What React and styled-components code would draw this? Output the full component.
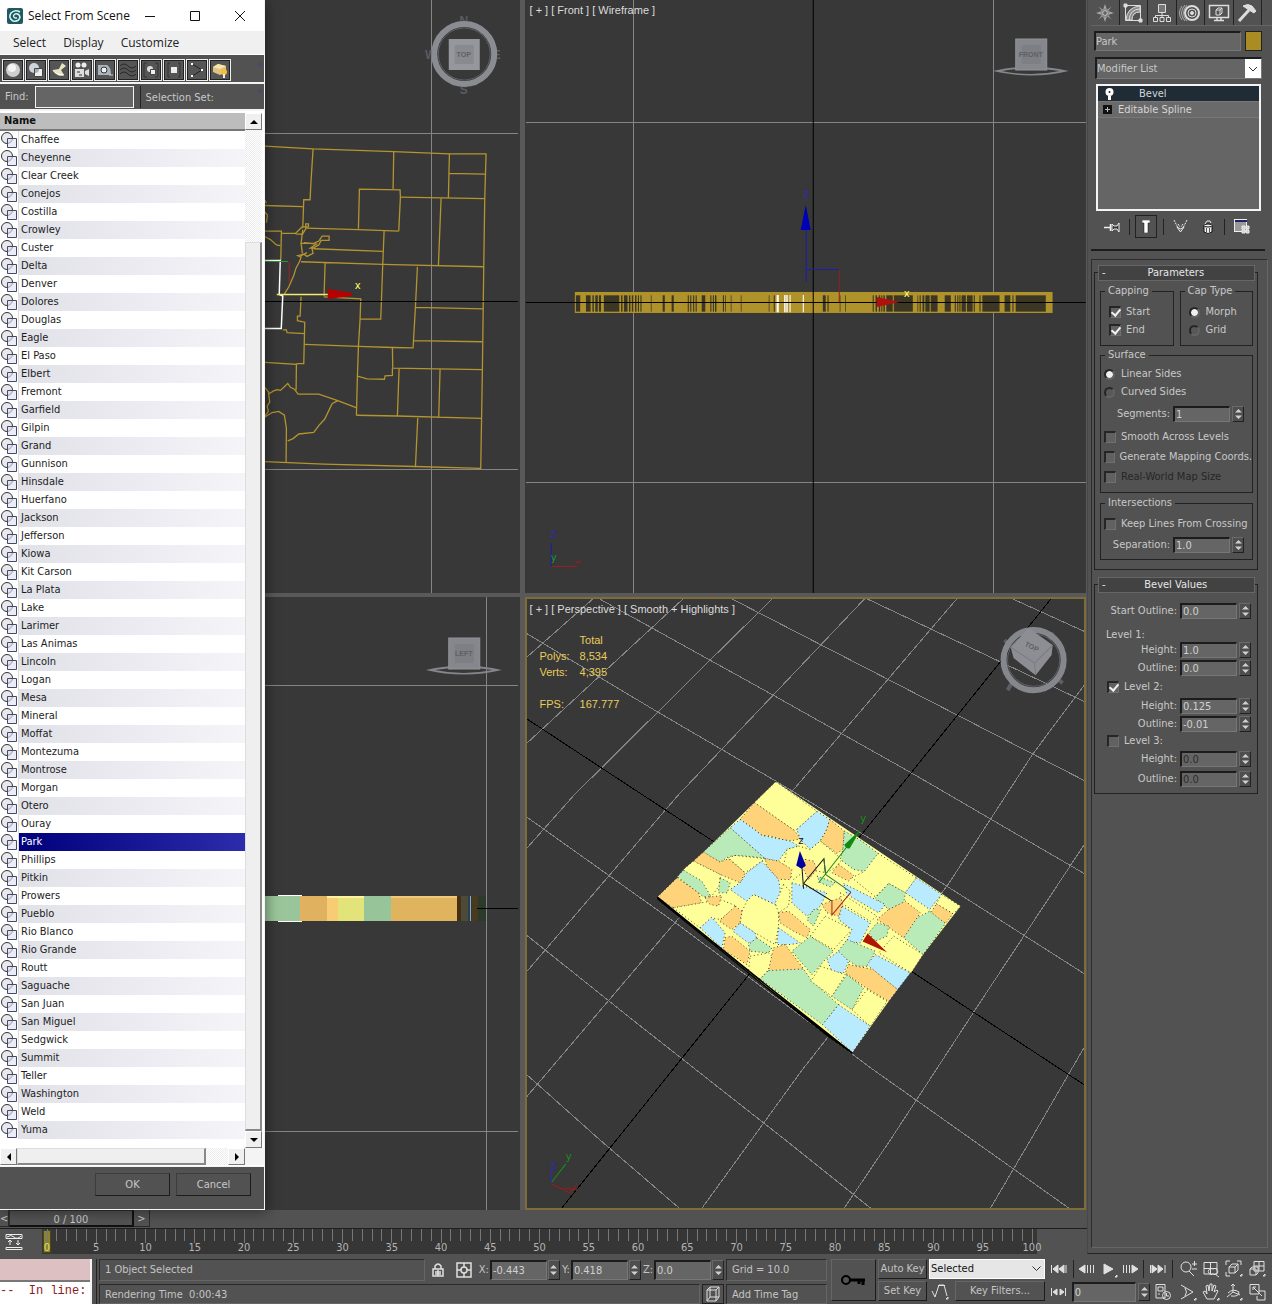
import { useState } from "react";
import styled, { createGlobalStyle, css } from "styled-components";

const GlobalStyle = createGlobalStyle`
    * {
        box-sizing: border-box;
    }

    body {
        margin: 0;
        background: #525252;
        color: #c8c8c8;
        font-family: "DejaVu Sans Condensed", "Noto Sans", sans-serif;
        font-size: 11px;
        line-height: 14px;
    }

    button, input, select {
        font: inherit;
        color: inherit;
        margin: 0;
        padding: 0;
        border-radius: 0;
    }

    svg {
        display: block;
        flex: none;
    }
`;

const counties = [
    "Chaffee", "Cheyenne", "Clear Creek", "Conejos", "Costilla", "Crowley",
    "Custer", "Delta", "Denver", "Dolores", "Douglas", "Eagle", "El Paso",
    "Elbert", "Fremont", "Garfield", "Gilpin", "Grand", "Gunnison",
    "Hinsdale", "Huerfano", "Jackson", "Jefferson", "Kiowa", "Kit Carson",
    "La Plata", "Lake", "Larimer", "Las Animas", "Lincoln", "Logan", "Mesa",
    "Mineral", "Moffat", "Montezuma", "Montrose", "Morgan", "Otero", "Ouray",
    "Park", "Phillips", "Pitkin", "Prowers", "Pueblo", "Rio Blanco",
    "Rio Grande", "Routt", "Saguache", "San Juan", "San Miguel", "Sedgwick",
    "Summit", "Teller", "Washington", "Weld", "Yuma",
];

const Page = styled.div`
    display: flex;
    flex-direction: column;
    min-height: 100vh;
`;

const Workspace = styled.div`
    position: relative;
    flex: 1;
    display: flex;
`;

const Stage = styled.main`
    flex: 1;
    min-width: 0;
    display: flex;
    flex-direction: column;
`;

function App() {
    return (
        <Page>
            <GlobalStyle />
            <Workspace>
                <Stage>
                    <Viewports />
                    <TimeSlider />
                    <TrackBar />
                </Stage>
                <CommandPanel />
                <SelectDialog />
            </Workspace>
            <StatusBar />
        </Page>
    );
}

/* ---------- viewports ---------- */

const Quad = styled.div`
    flex: 1;
    display: grid;
    grid-template-columns: 520fr 562fr;
    grid-template-rows: 593fr 613fr;
    gap: 4px 5px;
    padding-right: 1px;
    background: #595959;
`;

const View = styled.section`
    position: relative;
    overflow: hidden;
    background: #383838;
    border: ${(p) => (p.$active ? "2px solid #806c38" : "0")};
`;

const Drawing = styled.svg`
    position: absolute;
    inset: 0;
    width: 100%;
    height: 100%;
`;

const ViewLabel = styled.div`
    position: relative;
    padding: ${(p) => (p.$active ? "3px 3px" : "3px 5px")};
    font-family: "Liberation Sans", sans-serif;
    color: #dcdcdc;
`;

const Stats = styled.dl`
    position: relative;
    display: grid;
    grid-template-columns: 40px auto;
    justify-content: start;
    margin: 13px;
    line-height: 16px;
    font-family: "Liberation Sans", sans-serif;
    color: #e8cd5a;

    dt, dd {
        margin: 0;
        min-height: 16px;
    }
`;

const grid = { stroke: "#858585", strokeWidth: 1, fill: "none" };

const Axis = ({ x, y, color, children }) => (
    <text x={x} y={y} fill={color} fontSize="10" fontFamily="DejaVu Sans">
        {children}
    </text>
);

const CubeText = ({ x, y, children, ...rest }) => (
    <text
        x={x}
        y={y}
        textAnchor="middle"
        fontSize="7"
        fontWeight="bold"
        fontFamily="Liberation Sans"
        fill="#5e6066"
        {...rest}
    >
        {children}
    </text>
);

const SideCube = ({ x, y, children }) => (
    <g>
        <path
            d={`M${x - 38} ${y + 17}Q${x} ${y + 8} ${x + 38} ${y + 17}Q${x} ${y + 26} ${x - 38} ${y + 17}ZM${x - 29} ${y + 17}Q${x} ${y + 23} ${x + 29} ${y + 17}Q${x} ${y + 12} ${x - 29} ${y + 17}Z`}
            fill="#85878c"
            fillRule="evenodd"
        />
        <rect x={x - 15} y={y - 15} width="31" height="31" fill="#85878c" stroke="#929499" />
        <rect x={x - 9} y={y - 9} width="19" height="19" fill="#7d7f84" />
        <CubeText x={x} y={y + 3}>{children}</CubeText>
    </g>
);

const countyLines = [
    "M3 382L148 389L390 396L557 402H667L663 520L660 700L656 964L651 1224L455 1219L180 1213L3 1206",
    "M148 389L142 470L139 522H120L117 595M3 537L117 540M3 523L8 531",
    "M390 396L388 494M284 598L287 494L409 496L410 515L405 604",
    "M557 402L554 516M557 453L664 455M410 515L664 519M532 519L524 694",
    "M127 596L284 600L405 604M361 604L357 692L351 834H289",
    "M112 684L357 691L660 697M150 650L357 657M184 688L181 773",
    "M3 604H53L51 680M55 610H95L115 593H134V585H126V598L116 612L95 611",
    "M117 600L112 636H150L165 630L175 617H196V628H172L165 640L145 650L148 662L130 670L120 664L102 668L112 672L107 684L97 700L90 720L75 750L62 768",
    "M112 636L116 662M120 634L158 638L140 648H150M108 670L130 660",
    "M461 697L455 803L448 909L386 908M455 803L658 807M450 890L656 893",
    "M180 776L291 781L289 834L284 905M112 775L109 826H101V838L123 842L120 950H98",
    "M122 900L284 905L386 908L387 962L656 966",
    "M284 905L281 983L278 1085M281 983L310 990L362 991L364 982L386 981V962",
    "M406 964L401 1085M529 964L525 1089M278 1085L401 1087L652 1093M462 1092L455 1221",
    "M3 947L98 952L97 1020M57 862H68L70 869L123 872",
    "M3 1012L18 1028L28 1022L40 1018L50 1020L72 1002L80 1012L92 1017L103 1030H165L222 1047L277 1065",
    "M222 1047L205 1055L183 1095L165 1112L150 1130L105 1134L88 1146L72 1152",
    "M3 1090L25 1078L45 1075L62 1085L68 1120L67 1208",
    "M14 1026L18 1050L10 1062L14 1074L3 1088M3 554L11 562L8 582M3 618L20 626L38 640L50 642",
];

const TopView = () => (
    <View aria-label="Top viewport">
        <Drawing viewBox="0 0 520 593" preserveAspectRatio="xMidYMid slice">
            <g {...grid} shapeRendering="crispEdges">
                <path d="M431.5 0V593M0 133.5H518M0 469.5H518" />
            </g>
            <g
                transform="translate(264 0) scale(.3333 .3827)"
                fill="none"
                stroke="#b3942f"
                strokeWidth="1.3"
            >
                {countyLines.map((d) => (
                    <path key={d} d={d} vectorEffect="non-scaling-stroke" />
                ))}
            </g>
            <path d="M0 301.5H518" stroke="#000" />
            <path d="M265 260.5H280.500L279.500 294.500L283 296L281.500 328.500H265" fill="none" stroke="#fff" strokeWidth="1.5" />
            <path d="M265 261.5H288" stroke="#2e9b2e" />
            <path d="M289.500 262V282" stroke="#9b2424" />
            <path d="M277 294.500H330" stroke="#f4ea6c" strokeWidth="1.5" />
            <path d="M328 289L352 293V296L328 299Z" fill="#b80000" />
            <Axis x="355" y="289" color="#ffff66">x</Axis>
            <g fontFamily="Liberation Sans" fontSize="12" fontWeight="bold" fill="#5a5c61" textAnchor="middle">
                <text x="464" y="25">N</text>
                <text x="464" y="94">S</text>
                <text x="431" y="59">W</text>
                <text x="497" y="59">E</text>
            </g>
            <circle cx="464.500" cy="54" r="30" fill="none" stroke="#8a8c92" strokeWidth="6" />
            <circle cx="464.500" cy="54" r="26" fill="none" stroke="#5c5e63" />
            <rect x="449" y="39" width="31" height="31" fill="#95979d" />
            <rect x="455" y="45" width="19" height="19" fill="#888a90" />
            <CubeText x="464" y="57">TOP</CubeText>
        </Drawing>
    </View>
);

// dark slots between the vertical edges of the slab, as [from, to]
const slots = [
    [140, 152], [168, 181], [186, 190], [194, 201], [204, 210], [218, 261],
    [266, 270], [274, 284], [288, 292], [296, 300], [305, 309], [313, 316],
    [320, 323], [349, 351], [382, 388], [407, 413], [452, 455], [459, 462],
    [467, 470], [474, 477], [491, 501], [515, 518], [522, 525], [528, 532],
    [550, 553], [556, 558], [572, 574], [600, 602], [678, 680], [692, 695],
    [829, 837], [842, 845], [876, 878], [891, 893], [968, 971], [976, 980],
    [985, 989], [992, 995], [998, 1002], [1006, 1024], [1027, 1080],
    [1093, 1095], [1099, 1102], [1107, 1112], [1115, 1127], [1130, 1149],
    [1169, 1186], [1197, 1200], [1204, 1207], [1210, 1213], [1216, 1228],
    [1231, 1247], [1250, 1253], [1266, 1269], [1274, 1322], [1336, 1352],
    [1358, 1361], [1367, 1451],
];
const whiteEdges = [[700, 706], [721, 725], [727, 731], [736, 739], [773, 776]];

const FrontView = () => (
    <View aria-label="Front viewport">
        <Drawing viewBox="525 0 562 593" preserveAspectRatio="xMidYMid slice">
            <g {...grid} shapeRendering="crispEdges">
                <path d="M633.5 0V593M993.5 0V593M526 122.5H1086M526 482.5H1086" />
            </g>
            <g transform="translate(526 180) scale(.3584 .3333)">
                <rect x="137" y="336" width="1333" height="63" fill="#b0922a" />
                {slots.map(([a, b]) => (
                    <rect key={a} x={a} y="346" width={b - a} height="49" fill="#3c3724" />
                ))}
                {whiteEdges.map(([a, b]) => (
                    <rect key={a} x={a} y="345" width={b - a} height="52" fill="#fff" />
                ))}
            </g>
            <g fill="none">
                <path d="M526 302.5H1086M813.5 0V593" stroke="#000" />
                <path d="M806.500 282V230M806 269.500H839" stroke="#1c1cb0" />
                <path d="M839.500 270V302" stroke="#962020" />
                <path d="M551.500 543V566" stroke="#1c1cb0" />
                <path d="M552 566.500H577" stroke="#9a1c1c" />
            </g>
            <path d="M806 205L811 230H801Z" fill="#0000b4" />
            <path d="M877 297L900 302L877 307Z" fill="#b01010" />
            <path d="M574 560L578 562L583 560L578 564Z" fill="#9a1c1c" />
            <Axis x="804" y="197" color="#2828d0">z</Axis>
            <Axis x="904" y="297" color="#ffff66">x</Axis>
            <Axis x="551" y="537" color="#2828d0">z</Axis>
            <Axis x="551" y="561" color="#159a3a">y</Axis>
            <SideCube x={1031} y={54}>FRONT</SideCube>
        </Drawing>
        <ViewLabel>[ + ] [ Front ] [ Wireframe ]</ViewLabel>
    </View>
);

const LeftView = () => (
    <View aria-label="Left viewport">
        <Drawing viewBox="0 597 520 613" preserveAspectRatio="xMidYMid slice">
            <g {...grid} shapeRendering="crispEdges">
                <path d="M486.500 597V1210M0 685.500H518M0 1131.500H518" />
            </g>
            <g shapeRendering="crispEdges">
                <rect x="0" y="896" width="300" height="25" fill="#9ac59a" />
                <rect x="300" y="896" width="27" height="25" fill="#e0b15e" />
                <rect x="327" y="896" width="11" height="25" fill="#f8cc74" />
                <rect x="338" y="896" width="26" height="25" fill="#e2e47a" />
                <rect x="364" y="896" width="27" height="25" fill="#98c49a" />
                <rect x="391" y="896" width="66" height="25" fill="#e0b45e" />
                <rect x="457" y="896" width="4" height="25" fill="#453014" />
                <rect x="461" y="896" width="7" height="25" fill="#4d4a38" />
                <rect x="468" y="896" width="3" height="25" fill="#2c3f4e" />
                <rect x="470" y="896" width="1" height="25" fill="#7fb0cc" />
                <rect x="472" y="896" width="6" height="25" fill="#4a3a1c" />
                <rect x="478" y="896" width="8" height="25" fill="#2b3a2b" />
                <rect x="327" y="896" width="37" height="2" fill="#fff2a0" />
                <rect x="391" y="896" width="66" height="2" fill="#f0c87c" />
                <path d="M278 895.500H302M278 921.500H302" stroke="#fff" />
                <path d="M477 908.500H518" stroke="#000" />
            </g>
            <SideCube x={464} y={653}>LEFT</SideCube>
        </Drawing>
    </View>
);

const Y = "#ffff99";
const O = "#ffd37a";
const B = "#b9ebff";
const G = "#b9ebb9";

const regions = [
    [Y, "407,37 530,126 470,180 462,183 343,100"],
    [O, "343,100 462,183 482,208 450,215 425,210 390,200 365,198 345,182 300,150"],
    [B, "300,150 345,182 365,198 425,210 450,215 475,230 440,240 415,275 375,268 270,175"],
    [G, "270,175 375,268 340,262 285,258 265,262 240,278 190,248"],
    [B, "530,126 568,150 560,180 540,215 510,240 480,210 470,180"],
    [O, "568,150 612,185 608,240 590,252 540,215 560,180"],
    [G, "612,185 665,215 713,252 695,290 672,306 640,300 600,270 608,240"],
    [Y, "713,252 828,325 795,370 745,342 705,382 635,325 672,306"],
    [B, "828,325 903,375 868,420 795,370"],
    [Y, "903,375 960,410 938,433 888,403"],
    [O, "888,403 938,433 915,462 870,432"],
    [G, "868,425 915,462 848,555 790,505 820,450"],
    [G, "745,342 795,370 790,400 745,420 705,385"],
    [O, "745,420 795,395 840,430 790,505 740,470 710,450"],
    [Y, "475,230 510,240 540,215 605,270 590,290 560,310 500,300 460,330 430,290 440,240"],
    [O, "495,270 520,275 530,300 505,330 490,300"],
    [O, "375,268 415,275 455,300 450,330 415,330 380,290"],
    [B, "365,275 415,330 420,360 415,410 340,375 320,395 270,360 300,340 320,310"],
    [Y, "285,258 375,268 330,300 315,310 265,265"],
    [O, "190,248 240,278 265,268 315,310 300,340 240,315 160,275"],
    [Y, "160,275 240,315 240,345 215,380 205,380 130,300"],
    [G, "130,302 185,335 212,380 190,382 112,322"],
    [G, "240,325 270,340 262,370 235,370"],
    [O, "112,325 175,370 185,400 100,415 52,383"],
    [Y, "100,415 185,400 240,390 290,410 240,450 215,445 180,475"],
    [O, "195,385 245,378 235,410 210,405"],
    [B, "180,475 215,443 255,490 245,535"],
    [O, "285,410 306,425 300,460 275,480 238,455"],
    [Y, "306,425 320,395 340,375 415,410 415,470 405,525 345,490 300,460"],
    [Y, "430,345 450,365 445,410 415,430 405,400 420,370"],
    [B, "455,340 490,350 560,370 540,410 500,440 455,400"],
    [O, "415,430 445,425 510,480 500,505 460,485 420,460"],
    [B, "415,475 480,520 450,525 410,525"],
    [B, "300,460 345,490 350,510 325,520 278,485"],
    [O, "255,505 275,500 330,545 320,585 250,540"],
    [G, "350,505 395,535 385,550 330,545 325,525"],
    [Y, "330,560 385,550 400,565 385,600 360,628 325,605"],
    [O, "400,535 435,525 450,545 490,598 440,615 385,603"],
    [G, "510,500 580,545 555,570 515,615 455,545"],
    [G, "385,603 490,598 515,635 595,705 547,765 360,628"],
    [Y, "555,440 635,480 580,540 510,500"],
    [G, "520,420 542,420 520,470 500,450"],
    [O, "545,405 600,385 612,400 595,440 560,430"],
    [B, "605,410 690,460 660,520 620,515 635,480 595,450"],
    [G, "620,510 705,545 680,590 650,590 590,550"],
    [B, "560,570 595,545 625,575 610,610 575,605"],
    [Y, "540,590 615,615 575,680 512,635"],
    [G, "620,615 670,655 635,720 575,680"],
    [O, "625,585 700,600 772,660 745,695 670,650 615,610"],
    [B, "705,555 810,610 772,660 680,585"],
    [Y, "760,500 848,555 812,610 715,550"],
    [G, "710,460 745,470 740,500 705,515 685,490"],
    [Y, "680,660 740,695 690,770 635,720"],
    [B, "595,705 690,770 636,848 547,765"],
    [B, "610,342 735,405 715,430 620,375"],
    [Y, "600,370 710,440 690,455 605,402"],
    [O, "595,285 640,318 625,335 575,310"],
    [G, "530,320 585,340 570,352 540,340"],
];

const PerspectiveView = () => (
    <View $active aria-label="Perspective viewport">
        <Drawing viewBox="527 600 557 608" preserveAspectRatio="xMidYMid slice">
            <g {...grid} shapeRendering="crispEdges">
                <path d="M1010 599L1085 633M865 599L1085 703M730 599L1085 782M598 599L773 696L910 773L1085 875M526 634L658 713L776 782L917 868L1085 975" />
                <path d="M526 817L675 923L873 1070L1068 1208M526 935L640 1026L785 1140L870 1208M526 1074L600 1140L679 1208" />
                <path d="M594 599L526 659M684 599L526 745M773 599L710 661L574 796L526 850M865 599L678 796L526 973M957 599L791 793L675 923L526 1098" />
                <path d="M1085 684L1032 755L947 886L802 1070L702 1208M1085 843L980 1002L890 1140L844 1208M1085 1045L1030 1140L990 1208" />
            </g>
            <path d="M526 719L1085 1086M1051 599L748 976L562 1208" stroke="#000" shapeRendering="crispEdges" fill="none" />
            <g transform="translate(640 770) scale(.3333)">
                <path d="M52 380L636 848L634 852L560 800L360 640L52 390Z" fill="#000" />
                <polygon points="407,37 960,410 848,555 770,660 636,848 360,636 52,383" fill={Y} />
                {regions.map(([fill, points]) => (
                    <polygon
                        key={points}
                        points={points}
                        fill={fill}
                        stroke="#222"
                        strokeWidth="2.500"
                        strokeDasharray="3 8"
                    />
                ))}
                <path d="M52 383L360 632L636 850" stroke="#000" strokeWidth="5" fill="none" />
                <g fill="none" strokeWidth="3">
                    <path d="M490 342L575 395M490 342L551 268L556 315" stroke="#111" />
                    <path d="M551 268L556 315L632 368" stroke="#2b7a52" />
                    <path d="M535 340L620 232" stroke="#158a15" />
                    <path d="M575 395V437L632 368" stroke="#a03010" />
                    <path d="M485 290L490 358" stroke="#111133" />
                </g>
                <path d="M479 245L497 288L484 298L468 288Z" fill="#0000a0" />
                <path d="M612 226Q618 240 628 237L662 180Z" fill="#128a12" />
                <path d="M667 516L682 492L740 548Z" fill="#b01500" />
            </g>
            <Axis x="798" y="845" color="#101030">z</Axis>
            <Axis x="860" y="823" color="#189018">y</Axis>
            <path d="M551.500 1170V1182" stroke="#2828d0" />
            <path d="M552 1182L566 1164" stroke="#189018" />
            <path d="M552 1184L570 1193L577 1184M564 1188L578 1190" stroke="#9a1c1c" fill="none" />
            <Axis x="551" y="1169" color="#2828d0">z</Axis>
            <Axis x="566" y="1160" color="#189018">y</Axis>
            <path d="M1004 641L1010 647M1053 634L1048 640M1007 691L1011 684M1062 684L1057 680" stroke="#5c5e64" strokeWidth="4" />
            <circle cx="1033" cy="661" r="30" fill="none" stroke="#85878d" strokeWidth="6" />
            <circle cx="1033" cy="661" r="26" fill="none" stroke="#5c5e63" />
            <path d="M1028 629L1052 646L1051 656L1035 676L1013 659L1010 648Z" fill="#8c8e94" />
            <path d="M1010 648L1034 664L1052 646M1034 664L1035 676" stroke="#7a7c82" fill="none" />
            <CubeText x="1031" y="650" transform="rotate(26 1031 648)">TOP</CubeText>
        </Drawing>
        <ViewLabel $active>[ + ] [ Perspective ] [ Smooth + Highlights ]</ViewLabel>
        <Stats>
            <dt />
            <dd>Total</dd>
            <dt>Polys:</dt>
            <dd>8,534</dd>
            <dt>Verts:</dt>
            <dd>4,395</dd>
            <dt />
            <dd />
            <dt>FPS:</dt>
            <dd>167.777</dd>
        </Stats>
    </View>
);

const Viewports = () => (
    <Quad>
        <TopView />
        <FrontView />
        <LeftView />
        <PerspectiveView />
    </Quad>
);

/* ---------- time slider and track bar ---------- */

const SliderRow = styled.div`
    display: flex;
    height: 19px;
    padding-bottom: 1px;
    border-bottom: 1px solid #1e1e1e;
`;

const FrameStep = styled.button`
    width: ${(p) => p.$width}px;
    padding-top: 2px;
    background: none;
    border: 1px solid #2a2a2a;
    border-left: 0;
    border-top: 0;
`;

const SliderThumb = styled.button`
    width: 125px;
    padding-top: 2px;
    background: none;
    border: 1px solid #303030;
    border-right: 2px solid #111;
    border-bottom: 2px solid #111;
`;

const TimeSlider = () => (
    <SliderRow>
        <FrameStep $width={9}>&lt;</FrameStep>
        <SliderThumb>0 / 100</SliderThumb>
        <FrameStep $width={16}>&gt;</FrameStep>
    </SliderRow>
);

const TrackRow = styled.div`
    display: flex;
    height: 25px;
`;

const CurveButton = styled.button`
    width: 42px;
    padding-left: 5px;
    background: none;
    border: 0;
    color: #eee;
`;

const Track = styled.div`
    position: relative;
    flex: 1;
    margin-right: 50px;
    padding: 12px 5px 0;
    background: #363636;
`;

const Ticks = styled.svg`
    position: absolute;
    top: 0;
    left: 5px;
    width: calc(100% - 10px);
    height: 25px;
    overflow: visible;
`;

const TrackLabels = styled.div`
    position: relative;
    display: flex;
    justify-content: space-between;
    color: #b4b4b4;

    span {
        display: flex;
        justify-content: center;
        width: 0;
    }

    span:first-child {
        color: #e6dc50;
    }
`;

const Playhead = styled.div`
    position: absolute;
    left: 1px;
    top: 1px;
    width: 8px;
    height: 23px;
    background: #8a8432;
    border: 1px solid #4a4720;
`;

const TrackBar = () => {
    const frames = Array.from({ length: 101 }, (_, i) => i);
    return (
        <TrackRow>
            <CurveButton aria-label="Open mini curve editor">
                <svg width="18" height="17" fill="none" stroke="currentColor">
                    <path d="M1 1.500H17V5.500H1ZM1 14.500H17V16.500H1Z" />
                    <path d="M2 4Q6 1 9 4T16 3M5 12V7M3 9L5 7L7 9M13 7V12M11 10L13 12L15 10" />
                </svg>
            </CurveButton>
            <Track>
                <Playhead />
                <Ticks shapeRendering="crispEdges">
                    {frames.map((f) => (
                        <line key={f} x1={`${f}%`} x2={`${f}%`} y1="0" y2={f % 5 ? 12 : 14} stroke="#777" />
                    ))}
                </Ticks>
                <TrackLabels>
                    {frames.filter((f) => f % 5 === 0).map((f) => (
                        <span key={f}>{f}</span>
                    ))}
                </TrackLabels>
            </Track>
        </TrackRow>
    );
};

/* ---------- shared controls ---------- */

const sunken = css`
    background: #656565;
    border: 2px solid #1c1c1c;
    border-right: 1px solid #777;
    border-bottom: 1px solid #777;
`;

const SpinInput = styled.input`
    ${sunken}
    width: ${(p) => p.$width || 57}px;
    min-width: 0;
    height: ${(p) => p.$height || 16}px;
    padding-left: 1px;
    color: ${(p) => (p.disabled ? "#2c2c2c" : "#d0d0d0")};
`;

const SpinButton = styled.button`
    display: flex;
    align-items: center;
    justify-content: center;
    width: 12px;
    height: ${(p) => p.$height || 16}px;
    background: #4e4e4e;
    border: 1px solid #6a6a6a;
    border-right-color: #222;
    border-bottom-color: #222;
    color: #d0d0d0;
`;

const Spin = ({ $height }) => (
    <SpinButton $height={$height} aria-label="Adjust value">
        <svg width="7" height="10" fill="currentColor">
            <path d="M3.500 0L7 3.500H0ZM3.500 10L7 6.500H0Z" />
        </svg>
    </SpinButton>
);

const SpinRow = styled.label`
    display: flex;
    align-items: center;
    justify-content: flex-end;
    height: ${(p) => p.$height || 18}px;
    padding-right: 8px;

    input {
        margin: 0 2px 0 3px;
    }
`;

const Spinner = ({ label, value, height, disabled }) => (
    <SpinRow $height={height}>
        {label}
        <SpinInput defaultValue={value} disabled={disabled} />
        <Spin />
    </SpinRow>
);

const Tick = styled.input.attrs({ type: "checkbox" })`
    appearance: none;
    display: grid;
    place-content: center;
    width: 12px;
    height: 12px;
    background: #616161;
    border: 2px solid #262626;
    border-right: 1px solid #707070;
    border-bottom: 1px solid #707070;

    &:checked::after {
        content: "";
        width: 4px;
        height: 7px;
        margin-top: -2px;
        border: solid #f0f0f0;
        border-width: 0 2px 2px 0;
        transform: rotate(40deg);
    }
`;

const Dot = styled.input.attrs({ type: "radio" })`
    appearance: none;
    width: 11px;
    height: 11px;
    border-radius: 50%;
    border: 2px solid #262626;
    border-right-color: #636363;
    border-bottom-color: #636363;
    background: #585858;

    &:checked {
        background: radial-gradient(circle, #f0f0f0 3px, #585858 4px);
    }
`;

const Choice = styled.label`
    display: flex;
    align-items: center;
    gap: ${(p) => p.$gap || 5}px;
    height: ${(p) => p.$height || 18}px;
    white-space: nowrap;
    color: ${(p) => (p.$dim ? "#262626" : "inherit")};
`;

/* ---------- command panel ---------- */

const Panel = styled.aside`
    display: flex;
    flex-direction: column;
    width: 185px;
    padding-left: 3px;
    border-left: 1px solid #474747;
    border-bottom: 1px solid #222;
`;

const Tabs = styled.nav`
    display: flex;
    height: 26px;
    padding-right: 10px;
    border-bottom: 1px solid #666;
`;

const Tab = styled.button`
    flex: 1;
    display: flex;
    align-items: center;
    justify-content: center;
    background: none;
    border: 0;
    border-right: 1px solid #222;
    color: #ddd;
`;

const ObjectRow = styled.div`
    display: flex;
    gap: 4px;
    margin: 5px 10px 0 3px;
`;

const NameInput = styled.input`
    ${sunken}
    flex: 1;
    min-width: 0;
    height: 20px;
    color: #c8c8c8;
`;

const Swatch = styled.button`
    width: 17px;
    height: 20px;
    background: #a98c24;
    border: 1px solid #222;
`;

const ModifierSelect = styled.div`
    ${sunken}
    display: flex;
    height: 22px;
    margin: 6px 10px 0 4px;

    select {
        flex: 1;
        appearance: none;
        background: none;
        border: 0;
        outline: 0;
        color: #c8c8c8;
    }

    svg {
        background: #fff;
        color: #333;
    }
`;

const Stack = styled.ul`
    height: 127px;
    margin: 5px 11px 0 5px;
    padding: 0;
    list-style: none;
    background: #656565;
    border: 2px solid #f4f4f4;
`;

const StackItem = styled.li`
    display: flex;
    align-items: center;
    gap: ${(p) => (p.$selected ? 25 : 6)}px;
    height: 16px;
    padding-left: ${(p) => (p.$selected ? 7 : 5)}px;
    background: ${(p) => (p.$selected ? "#1f2b35" : "#6a6a6a")};
    border-bottom: 1px solid #777;
    color: #d4d4d4;
`;

const StackTools = styled.div`
    display: flex;
    align-items: center;
    justify-content: space-between;
    height: 31px;
    margin: 0 19px 0 10px;

    button {
        display: flex;
        align-items: center;
        justify-content: center;
        width: 22px;
        height: 23px;
        background: none;
        border: 0;
    }

    button[aria-pressed="true"] {
        border: 1px solid #222;
    }

    i {
        width: 1px;
        height: 16px;
        background: #222;
    }
`;

const Rollouts = styled.div`
    flex: 1;
    margin: 8px 4px 5px 0;
    padding-top: 12px;
    border: 1px solid #2c2c2c;
    border-right-color: #666;
    border-bottom-color: #666;
`;

const Rule = styled.hr`
    width: 174px;
    margin: 7px 0 0;
    border: 0;
    border-top: 2px solid #1c1c1c;
`;

const Rollout = styled.section`
    margin: 0 9px 14px 2px;
    padding: 0 4px ${(p) => p.$bottom}px 5px;
    border: 1px solid #222;
`;

const RolloutHead = styled.button`
    display: flex;
    width: 157px;
    height: 16px;
    margin: -8px 0 3px -2px;
    padding: 0 8px 0 3px;
    align-items: center;
    background: #424242;
    border: 1px solid #666;
    color: #e6e6e6;

    span {
        flex: 1;
    }
`;

const Groups = styled.div`
    display: grid;
    grid-template-columns: 1fr 1fr;
    gap: 6px;
    margin-bottom: 2px;
`;

const Group = styled.fieldset`
    min-width: 0;
    margin: 0 0 3px;
    padding: ${(p) => p.$pad};
    border: 1px solid #222;

    legend {
        margin-left: 1px;
        padding: 0 3px;
    }

    ${Groups} & {
        margin: 0;
    }

    ${Groups} & label {
        padding-left: 5px;
    }
`;

const LevelTitle = styled.div`
    height: 12px;
    margin: 8px 0 0 6px;
    line-height: 12px;
`;

const LevelChoice = styled(Choice)`
    margin-left: 7px;
`;

const BevelRows = styled.div`
    padding-top: 5px;

    ${SpinRow} {
        padding-right: 2px;
    }
`;

const CommandPanel = () => (
    <Panel>
        <Tabs>
            <Tab aria-label="Create">
                <svg width="18" height="18" stroke="#a8a8a8" strokeWidth="2" fill="none">
                    <path d="M9 0L11 6L15.500 2.500L12 7L18 9L12 11L15.500 15.500L11 12L9 18L7 12L2.500 15.500L6 11L0 9L6 7L2.500 2.500L7 6Z" fill="#a8a8a8" stroke="none" />
                    <circle cx="9" cy="9" r="3.500" fill="#ddd" stroke="#8a8a8a" />
                    <circle cx="9" cy="9" r="1" stroke="#666" />
                </svg>
            </Tab>
            <Tab aria-label="Modify">
                <svg width="20" height="20" stroke="currentColor" fill="none">
                    <path d="M2.500 2.500H17.500V17.500H2.500Z" />
                    <path d="M3 17Q4 4 17 3V9Q9 9 9 17Z" fill="#8a8a8a" />
                    <path d="M6 17Q7 6 17 6" />
                    <path d="M1 1H4V4H1ZM16 16H19V19H16Z" fill="currentColor" />
                </svg>
            </Tab>
            <Tab aria-label="Hierarchy">
                <svg width="20" height="20" stroke="currentColor" fill="none">
                    <path d="M6.500 1.500H13.500V9.500H6.500Z" fill="#777" />
                    <path d="M10 9.500V14M3.500 14V12.500H16.500V14M1.500 14.500H5.500V18.500H1.500ZM8 14.500H12V18.500H8ZM14.500 14.500H18.500V18.500H14.500Z" />
                </svg>
            </Tab>
            <Tab aria-label="Motion">
                <svg width="22" height="18" stroke="currentColor" fill="none">
                    <circle cx="13" cy="9" r="7" strokeWidth="2" />
                    <circle cx="13" cy="9" r="4" />
                    <circle cx="13" cy="9" r="1.500" fill="currentColor" />
                    <path d="M6 1Q-1 9 6 17M3 2Q-2 9 3 16M8 1Q1 9 8 17" stroke="#aaa" />
                </svg>
            </Tab>
            <Tab aria-label="Display">
                <svg width="22" height="18" stroke="currentColor" fill="none">
                    <path d="M1.500 1.500H20.500V13.500H1.500ZM6 16.500H16M9 14V16M13 14V16" strokeWidth="1.500" />
                    <path d="M8 6L10 4H14V9L12 11H8ZM8 6H12V11M12 6L14 4" />
                </svg>
            </Tab>
            <Tab aria-label="Utilities">
                <svg width="20" height="20" stroke="currentColor" fill="none">
                    <path d="M2 18L12 7" strokeWidth="3" />
                    <path d="M6 3Q11 0 15 3L19 8L17 10L12 7Z" fill="currentColor" />
                </svg>
            </Tab>
        </Tabs>
        <ObjectRow>
            <NameInput aria-label="Object name" defaultValue="Park" />
            <Swatch aria-label="Object color" />
        </ObjectRow>
        <ModifierSelect>
            <select aria-label="Modifier list">
                <option>Modifier List</option>
            </select>
            <svg width="16" height="19" fill="none" stroke="currentColor">
                <path d="M4 8L8 12L12 8" />
            </svg>
        </ModifierSelect>
        <Stack>
            <StackItem $selected>
                <svg width="9" height="12" fill="#fff">
                    <circle cx="4.500" cy="4" r="4" />
                    <path d="M3 8H6V12H3Z" />
                    <circle cx="4.500" cy="4" r="1" fill="#222" />
                </svg>
                Bevel
            </StackItem>
            <StackItem>
                <svg width="9" height="9" stroke="#bbb">
                    <rect width="9" height="9" fill="#111" stroke="none" />
                    <path d="M2 4.500H7M4.500 2V7" />
                </svg>
                Editable Spline
            </StackItem>
        </Stack>
        <StackTools>
            <button aria-label="Pin stack">
                <svg width="16" height="12" stroke="#eee" fill="none">
                    <path d="M0 6.500H6M6.500 3V10" strokeWidth="1.500" />
                    <path d="M8 3L10 5H13L15 2V11L13 8H10L8 10Z" fill="#333" />
                </svg>
            </button>
            <i />
            <button aria-label="Show end result" aria-pressed="true">
                <svg width="8" height="13">
                    <path d="M0 0H8V3H6V13H2V3H0Z" fill="#fff" stroke="#111" strokeWidth=".5" />
                </svg>
            </button>
            <i />
            <button aria-label="Make unique">
                <svg width="15" height="15" stroke="#eee" fill="none">
                    <path d="M1 1L5 9M14 1L10 9M5 5L7 8M10 5L8 8" strokeDasharray="2 1" />
                    <path d="M4 8L7.500 10L11 8L7.500 13Z" />
                </svg>
            </button>
            <button aria-label="Remove modifier">
                <svg width="10" height="14" stroke="#111" fill="none">
                    <path d="M1 6V12Q5 15 9 12V6Z" fill="#f0f0f0" />
                    <path d="M3.500 8V12M6.500 8V12" stroke="#555" />
                    <ellipse cx="5" cy="5.500" rx="4" ry="1.500" fill="#eee" />
                    <path d="M2 4L4 1H7L8 3" stroke="#eee" />
                </svg>
            </button>
            <i />
            <button aria-label="Configure modifier sets">
                <svg width="16" height="15" stroke="#eee" fill="none">
                    <rect x=".5" y=".5" width="12" height="12" fill="#999" />
                    <path d="M1 2H13" stroke="#1a2466" strokeWidth="2" />
                    <path d="M8 7H11V10H8ZM12 7H15V10H12ZM8 11H11V14H8ZM12 11H15V14H12Z" fill="#ccc" />
                </svg>
            </button>
        </StackTools>
        <Rule />
        <Rollouts>
            <Rollout $bottom={6}>
                <RolloutHead>- <span>Parameters</span></RolloutHead>
                <Groups>
                    <Group $pad="5px 3px 6px">
                        <legend>Capping</legend>
                        <Choice><Tick defaultChecked />Start</Choice>
                        <Choice><Tick defaultChecked />End</Choice>
                    </Group>
                    <Group $pad="5px 3px 6px">
                        <legend>Cap Type</legend>
                        <Choice $gap={6}><Dot name="cap" defaultChecked />Morph</Choice>
                        <Choice $gap={6}><Dot name="cap" />Grid</Choice>
                    </Group>
                </Groups>
                <Group $pad="3px 0 5px 3px">
                    <legend>Surface</legend>
                    <Choice $gap={6}><Dot name="sides" defaultChecked />Linear Sides</Choice>
                    <Choice $gap={6}><Dot name="sides" />Curved Sides</Choice>
                    <Spinner label="Segments:" value="1" height={26} />
                    <Choice $height={20}><Tick />Smooth Across Levels</Choice>
                    <Choice $height={20}><Tick />Generate Mapping Coords.</Choice>
                    <Choice $height={20} $dim><Tick disabled />Real-World Map Size</Choice>
                </Group>
                <Group $pad="4px 0 3px 3px">
                    <legend>Intersections</legend>
                    <Choice $height={20}><Tick />Keep Lines From Crossing</Choice>
                    <Spinner label="Separation:" value="1.0" height={22} />
                </Group>
            </Rollout>
            <Rollout $bottom={4}>
                <RolloutHead>- <span>Bevel Values</span></RolloutHead>
                <BevelRows>
                    <Spinner label="Start Outline:" value="0.0" height={20} />
                    <LevelTitle>Level 1:</LevelTitle>
                    <Spinner label="Height:" value="1.0" />
                    <Spinner label="Outline:" value="0.0" />
                    <LevelChoice $height={20}><Tick defaultChecked />Level 2:</LevelChoice>
                    <Spinner label="Height:" value="0.125" />
                    <Spinner label="Outline:" value="-0.01" />
                    <LevelChoice $height={16}><Tick />Level 3:</LevelChoice>
                    <Spinner label="Height:" value="0.0" height={20} disabled />
                    <Spinner label="Outline:" value="0.0" height={20} disabled />
                </BevelRows>
            </Rollout>
        </Rollouts>
    </Panel>
);

/* ---------- select from scene dialog ---------- */

const Dialog = styled.div`
    position: absolute;
    top: 0;
    left: 0;
    width: 265px;
    background: #525252;
    border-right: 1px solid #f4f4f4;
    border-bottom: 1px solid #f4f4f4;
    box-shadow: 2px 2px 12px rgba(0, 0, 0, 0.4);
`;

const TitleBar = styled.header`
    display: flex;
    align-items: center;
    height: 31px;
    padding: 0 2px 0 7px;
    background: #fff;
    color: #111;
    font-family: "Open Sans", sans-serif;
    font-size: 12px;

    h1 {
        flex: 1;
        min-width: 0;
        margin: 0 0 0 5px;
        font-size: 12px;
        font-weight: normal;
        white-space: nowrap;
    }
`;

const WindowButton = styled.button`
    display: flex;
    flex: none;
    align-items: center;
    justify-content: center;
    width: 45px;
    height: 30px;
    background: none;
    border: 0;
`;

const MenuBar = styled.nav`
    display: flex;
    gap: 17px;
    height: 24px;
    padding-left: 13px;
    background: #f0f0f0;
    border-bottom: 1px solid #fff;
    font-family: "Open Sans", sans-serif;
    font-size: 12px;

    button {
        background: none;
        border: 0;
        color: #222;
    }
`;

const Filters = styled.div`
    display: flex;
    align-items: center;
    gap: 1px;
    height: 29px;
    padding: 3px 1px 0 2px;
    border-bottom: 2px solid #f4f4f4;

    button {
        display: flex;
        align-items: center;
        justify-content: center;
        width: 22px;
        height: 22px;
        background: #555;
        border: 1px solid #eee;
        outline: 1px solid #222;
        outline-offset: -2px;
    }
`;

const More = styled.b`
    align-self: flex-start;
    margin-left: auto;
    font-weight: normal;
    color: #44447c;
`;

const FindRow = styled.div`
    display: flex;
    align-items: center;
    height: 27px;
    padding: 0 1px 0 5px;
    border-bottom: 2px solid #f4f4f4;

    input {
        width: 99px;
        height: 22px;
        margin: 0 6px 0 6px;
        background: #656565;
        border: 1px solid #f4f4f4;
    }

    span {
        padding: 5px 0 3px 5px;
        border-left: 1px solid #222;
    }
`;

const ListArea = styled.div`
    display: flex;
    padding-top: 2px;
    background: #fff;
    color: #1c1c1c;
`;

const NameList = styled.div`
    flex: 1;
    padding-bottom: 9px;
`;

const NameTable = styled.table`
    width: 100%;
    border-spacing: 0;
    table-layout: fixed;

    th {
        height: 18px;
        padding: 0 4px;
        background: #bdbdbd;
        border-bottom: 2px solid #777;
        text-align: left;
        color: #111;
    }

    col:first-child {
        width: 18px;
    }
`;

const NameRow = styled.tr`
    height: 18px;
    cursor: default;

    td {
        padding: 0 0 0 1px;
    }

    td:last-child {
        padding: 0 2px;
        border-left: 1px solid #ddd;
        background: ${(p) =>
            p.$selected
                ? "linear-gradient(90deg, #00007c, #2c2cac)"
                : p.$even
                ? "linear-gradient(90deg, #e1e1e8, #f4f4f9)"
                : "#fff"};
        color: ${(p) => (p.$selected ? "#fff" : "inherit")};
    }
`;

const ScrollColumn = styled.div`
    display: flex;
    flex-direction: column;
    width: 17px;
    margin-right: 2px;
    background: #f4f4f4;
`;

const ScrollLine = styled.div`
    display: flex;
    height: 18px;
    padding-right: 19px;
    background: #f4f4f4;
    border-bottom: 1px solid #fff;
`;

const ScrollButton = styled.button`
    display: flex;
    align-items: center;
    justify-content: center;
    width: 17px;
    height: 17px;
    background: #f0f0f0;
    border: 1px solid #fff;
    border-right-color: #777;
    border-bottom-color: #777;
    color: #000;
`;

const ScrollThumb = styled.div`
    flex: ${(p) => p.$grow};
    background: #efefef;
    border: 1px solid #ddd;
    border-right: 2px solid #888;
    border-bottom: 2px solid #888;
`;

const ScrollTrack = styled.div`
    flex: ${(p) => p.$grow};
    background: repeating-conic-gradient(#fff 0 25%, #ececec 0 50%) 0 0 / 2px 2px;
`;

const Actions = styled.footer`
    display: flex;
    justify-content: flex-end;
    gap: 6px;
    height: 43px;
    padding: 6px 13px 0;
    border-top: 1px solid #f4f4f4;

    button {
        width: 75px;
        height: 23px;
        background: none;
        border: 1px solid #3c3c3c;
        border-right-color: #1c1c1c;
        border-bottom-color: #1c1c1c;
    }
`;

const Arrow = ({ d }) => (
    <svg width="8" height="8" fill="currentColor">
        <path d={d} />
    </svg>
);

const ShapeIcon = () => (
    <svg width="17" height="17" fill="none" stroke="#444a66">
        <circle cx="6" cy="6" r="5.500" fill="#e8e8ee" stroke="#333" />
        <path d="M6.500 6.500H15.500V15.500H6.500Z" fill="#dfe0f0" fillOpacity=".6" />
    </svg>
);

const filters = [
    ["Geometry", <><circle cx="8" cy="8" r="7" fill="#cfcfcf" /><circle cx="7" cy="6" r="4" fill="#f4f4f4" /></>],
    ["Shapes", <><circle cx="6" cy="6" r="5" fill="#cfd3dc" /><path d="M6.500 6.500H14.500V14.500H6.500Z" fill="#eee" stroke="#444" /><path d="M7 11Q11 11 11 7H7Z" fill="#a8adb8" /></>],
    ["Lights", <><path d="M11 1L15 4L10 8L13 13Q7 16 2 8L8 7Z" fill="#e8e4c0" /><path d="M2 8Q4 13 13 13" stroke="#fff" fill="none" /></>],
    ["Cameras", <><circle cx="4" cy="3" r="2.500" fill="#eee" /><circle cx="10" cy="3" r="2.500" fill="#eee" /><path d="M1 7H10V15H1ZM11 9L15 7V14L11 12Z" fill="#ddd" /><path d="M3 10H6M5 13H8" stroke="#333" /></>],
    ["Helpers", <><path d="M1 3H10Q14 5 14 13H1Z" fill="#aab4c0" /><circle cx="7" cy="8" r="3" fill="#eee" stroke="#333" /><path d="M12 13H16" stroke="#ccc" /></>],
    ["Space warps", <path d="M0 4Q4 0 8 4T16 4M0 8Q4 4 8 8T16 8M0 12Q4 8 8 12T16 12" fill="none" stroke="#272727" />],
    ["Groups", <><path d="M4 1H1V15H4M12 1H15V15H12" fill="none" stroke="#333" /><circle cx="7" cy="7" r="3" fill="#ddd" /><path d="M7.500 7.500H12.500V12.500H7.500Z" fill="#eee" stroke="#444" /></>],
    ["XRefs", <><path d="M4 1H2V15H4M12 1H14V15H12" fill="none" stroke="#333" /><path d="M5 5H11V11H5Z" fill="#eee" /></>],
    ["Bones", <><path d="M3 2L13 8L3 14" fill="none" stroke="#222" /><path d="M2 1H4V3H2ZM12 7H14V9H12ZM2 13H4V15H2Z" fill="#fff" /></>],
    ["Containers", <><path d="M1 5L6 2L14 4V10L8 13L1 10Z" fill="#dfc383" /><path d="M1 5L8 7L14 4L6 2Z" fill="#f8e6ae" /><circle cx="12" cy="10" r="3" fill="#f5c03a" /><path d="M11 12H13V16H11Z" fill="#eee" /></>],
];

function SelectDialog() {
    const [selected, setSelected] = useState("Park");

    return (
        <Dialog role="dialog" aria-label="Select From Scene">
            <TitleBar>
                <svg width="16" height="16" fill="none" stroke="#d8f2ee" strokeWidth="1.500">
                    <rect width="16" height="16" rx="2" fill="#1d5a62" stroke="none" />
                    <path d="M13 4Q8 1 4 5Q1 10 6 13Q12 14 13 9Q12 5 8 6Q5 8 8 10H10" />
                </svg>
                <h1>Select From Scene</h1>
                <WindowButton aria-label="Minimize">
                    <svg width="10" height="10" stroke="#111"><path d="M0 5.500H10" /></svg>
                </WindowButton>
                <WindowButton aria-label="Maximize">
                    <svg width="10" height="10" stroke="#111" fill="none"><path d="M.5 .5H9.500V9.500H.5Z" /></svg>
                </WindowButton>
                <WindowButton aria-label="Close">
                    <svg width="10" height="10" stroke="#111"><path d="M0 0L10 10M10 0L0 10" /></svg>
                </WindowButton>
            </TitleBar>
            <MenuBar>
                <button>Select</button>
                <button>Display</button>
                <button>Customize</button>
            </MenuBar>
            <Filters>
                {filters.map(([name, icon]) => (
                    <button key={name} aria-label={name}>
                        <svg width="16" height="16">{icon}</svg>
                    </button>
                ))}
                <More>»</More>
            </Filters>
            <FindRow>
                <label htmlFor="find">Find:</label>
                <input id="find" />
                <span>Selection Set:</span>
                <More>»</More>
            </FindRow>
            <ListArea>
                <NameList>
                    <NameTable>
                        <colgroup>
                            <col />
                            <col />
                        </colgroup>
                        <thead>
                            <tr>
                                <th colSpan={2}>Name</th>
                            </tr>
                        </thead>
                        <tbody>
                            {counties.map((name, index) => (
                                <NameRow
                                    key={name}
                                    $even={index % 2 === 1}
                                    $selected={name === selected}
                                    onClick={() => setSelected(name)}
                                >
                                    <td><ShapeIcon /></td>
                                    <td>{name}</td>
                                </NameRow>
                            ))}
                        </tbody>
                    </NameTable>
                </NameList>
                <ScrollColumn>
                    <ScrollButton aria-label="Scroll up"><Arrow d="M0 6H8L4 2Z" /></ScrollButton>
                    <ScrollTrack $grow={112} />
                    <ScrollThumb $grow={890} />
                    <ScrollButton aria-label="Scroll down"><Arrow d="M0 2H8L4 6Z" /></ScrollButton>
                </ScrollColumn>
            </ListArea>
            <ScrollLine>
                <ScrollButton aria-label="Scroll left"><Arrow d="M6 0V8L2 4Z" /></ScrollButton>
                <ScrollThumb $grow={189} />
                <ScrollTrack $grow={22} />
                <ScrollButton aria-label="Scroll right"><Arrow d="M2 0V8L6 4Z" /></ScrollButton>
            </ScrollLine>
            <Actions>
                <button>OK</button>
                <button>Cancel</button>
            </Actions>
        </Dialog>
    );
}

/* ---------- status bar ---------- */

const Bar = styled.footer`
    display: flex;
    gap: 4px;
    height: 50px;
    padding: 5px 4px 0 0;
    color: #c4c4c4;
`;

const Listener = styled.div`
    display: grid;
    grid-template-rows: 21px 22px;
    gap: 2px;
    width: 92px;
    background: #777;
    border-right: 2px solid #f4f4f4;
    white-space: pre;
    overflow: hidden;
    font: 12px/18px "Liberation Mono", monospace;
    color: #8c1c1c;

    div:first-child {
        background: #dcc0c2;
    }

    div:last-child {
        background: #fff;
    }
`;

const Prompts = styled.div`
    flex: 1;
    min-width: 0;
    display: grid;
    grid-template-rows: 22px 20px;
    gap: 3px;
    padding-left: 2px;
    border-left: 1px solid #222;
`;

const Line = styled.div`
    display: flex;
    align-items: center;
    gap: 2px;
    min-width: 0;
`;

const Readout = styled.div`
    flex: ${(p) => (p.$width ? "none" : 1)};
    width: ${(p) => (p.$width ? `${p.$width}px` : "auto")};
    height: 100%;
    min-width: 0;
    padding: 3px 5px 0;
    overflow: hidden;
    white-space: pre;
    border: 1px solid #2a2a2a;
    border-right-color: #666;
    border-bottom-color: #666;
`;

const Coord = styled.label`
    display: flex;
    align-items: center;
    gap: 1px;
`;

const IconButton = styled.button`
    display: flex;
    align-items: center;
    justify-content: center;
    width: ${(p) => p.$width || 22}px;
    height: 20px;
    background: none;
    border: ${(p) => (p.$framed ? "1px solid #222" : "0")};
    color: #e0e0e0;
`;

const Keys = styled.div`
    display: grid;
    grid-template-columns: 45px 49px 24px 90px;
    grid-template-rows: 20px 20px;
    gap: 2px;
`;

const KeySelect = styled.div`
    grid-column: 3 / 5;
    display: flex;
    align-items: center;
    padding: 0 3px 0 1px;
    background: #e6e6e6;
    border: 1px solid #fff;
    color: #111;

    select {
        flex: 1;
        appearance: none;
        background: none;
        border: 0;
        outline: 0;
    }
`;

const KeyButton = styled.button`
    display: flex;
    align-items: center;
    justify-content: center;
    grid-row: ${(p) => (p.$tall ? "1 / 3" : "auto")};
    background: none;
    border: 1px solid #666;
    border-right-color: #1c1c1c;
    border-bottom-color: #1c1c1c;
    white-space: nowrap;
`;

const Transport = styled.div`
    display: grid;
    grid-template-rows: 20px 20px;
    gap: 3px;
    width: 124px;
`;

const TransportRow = styled.div`
    display: flex;
    align-items: center;
    justify-content: space-between;

    i {
        width: 1px;
        height: 18px;
        background: #222;
    }
`;

const Nav = styled.div`
    display: grid;
    grid-template-columns: repeat(4, 22px);
    grid-template-rows: 20px 20px;
    gap: 3px 1px;
`;

const Glyph = ({ d, solid, w = 18 }) => (
    <svg width={w} height="18" viewBox={`0 0 ${w} 18`} stroke="currentColor" fill={solid ? "currentColor" : "none"}>
        <path d={d} />
    </svg>
);

const navGlyphs = [
    ["Zoom", "M7 2A5 5 0 1 0 7 12A5 5 0 1 0 7 2M10 11L15 16M13 4H18M15.500 1V6M13 9H18"],
    ["Zoom all", "M2 2.500H15V14H2ZM8.500 2V14M2 8.500H15M11 9A3 3 0 1 0 11 14A3 3 0 1 0 11 9M13 14L17 17"],
    ["Zoom extents", "M1 5V1H5M12 1H16V5M1 12V16H5M4 7L7 4H13V10L10 13H4ZM4 7H10V13M10 7L13 4M15 16H17V14Z"],
    ["Zoom extents all", "M6 1.500H16V11H6ZM11 1V11M6 6H16M2 9L4 7H10V13L8 15H2ZM2 9H8V15M15 16H17V14Z"],
    ["Field of view", "M2 2L14 9L2 16M6 5Q9 9 6 13M15 17H17V15Z"],
    ["Pan", "M5 16L1 9L3 8L5 11L4 3L6 2L7 8L8 1H10L10 8L12 2L14 3L12 9L15 7L16 8L12 16ZM15 17H17V15Z"],
    ["Orbit", "M8 9V1M6 3L8 1L10 3M8 9L15 12M8 9L2 14M3 10Q8 5 14 9Q14 14 6 13M15 17H17V15Z"],
    ["Maximize viewport", "M2 1.500H11V11H2ZM5 4L14 13M5 7V4H8M11 8H17V17H9V13"],
];

const StatusBar = () => (
    <Bar>
        <Listener>
            <div />
            <div>--  In line:</div>
        </Listener>
        <Prompts>
            <Line>
                <Readout>1 Object Selected</Readout>
                <IconButton aria-label="Lock selection">
                    <svg width="14" height="16" stroke="currentColor" fill="none" strokeWidth="1.500">
                        <path d="M2 7H12V14H2ZM4 7V4Q7 0 10 4V7M4 10H10M4 12H10M7 8V14" />
                    </svg>
                </IconButton>
                <IconButton aria-label="Absolute mode" $width={26}>
                    <svg width="16" height="16" stroke="currentColor" fill="none" strokeWidth="1.500">
                        <path d="M1 1H15V15H1ZM8 1V5M8 11V15M1 8H5M11 8H15" />
                        <circle cx="8" cy="8" r="3" />
                    </svg>
                </IconButton>
                <Coord>X:<SpinInput $height={20} defaultValue="-0.443" /><Spin $height={20} /></Coord>
                <Coord>Y:<SpinInput $height={20} defaultValue="0.418" /><Spin $height={20} /></Coord>
                <Coord>Z:<SpinInput $height={20} defaultValue="0.0" /><Spin $height={20} /></Coord>
                <Readout $width={101}>Grid = 10.0</Readout>
            </Line>
            <Line>
                <Readout>{"Rendering Time  0:00:43"}</Readout>
                <IconButton aria-label="Adaptive degradation" $framed>
                    <Glyph d="M3 5L6 2H15V12L12 16H3ZM3 5H12V16M12 5L15 2M6 2V12H15M6 12L3 16" />
                </IconButton>
                <Readout $width={101}>Add Time Tag</Readout>
            </Line>
        </Prompts>
        <Keys>
            <KeyButton $tall aria-label="Set keys">
                <svg width="25" height="14" stroke="#000" fill="none" strokeWidth="2">
                    <circle cx="5" cy="7" r="4" />
                    <path d="M9 7H24M18 7V11M22 7V12" strokeWidth="3" />
                </svg>
            </KeyButton>
            <KeyButton>Auto Key</KeyButton>
            <KeySelect>
                <select aria-label="Key selection set">
                    <option>Selected</option>
                </select>
                <svg width="9" height="6" fill="none" stroke="#333">
                    <path d="M.5 .5L4.500 4.500L8.500 .5" />
                </svg>
            </KeySelect>
            <KeyButton>Set Key</KeyButton>
            <IconButton aria-label="Tangents">
                <Glyph d="M1 9L4 15L8 3H13L16 14M7 3.500H14M15 17H17V15Z" />
            </IconButton>
            <KeyButton>Key Filters...</KeyButton>
        </Keys>
        <Transport>
            <TransportRow>
                <IconButton aria-label="Go to start" $width={20}>
                    <Glyph solid d="M1.500 5V13M3 9L8 5V13ZM9 9L14 5V13ZM16 5V13" />
                </IconButton>
                <i />
                <IconButton aria-label="Previous frame" $width={18}>
                    <Glyph solid d="M1 9L7 5V13ZM9.500 5V13M12.500 5V13M15.500 5V13" />
                </IconButton>
                <IconButton aria-label="Play" $width={18}>
                    <Glyph solid d="M4 4L13 9L4 14ZM15 17H17V15Z" />
                </IconButton>
                <IconButton aria-label="Next frame" $width={18}>
                    <Glyph solid d="M2.500 5V13M5.500 5V13M8.500 5V13M11 5L17 9L11 13Z" />
                </IconButton>
                <i />
                <IconButton aria-label="Go to end" $width={20}>
                    <Glyph solid d="M1.500 5V13M3 5L8 9L3 13ZM9 5L14 9L9 13ZM16 5V13" />
                </IconButton>
                <i />
            </TransportRow>
            <TransportRow>
                <IconButton aria-label="Key mode" $width={20}>
                    <Glyph solid d="M1.500 5V13M3 9L7 6V12ZM15.500 5V13M14 9L10 6V12Z" />
                </IconButton>
                <SpinInput $width={64} $height={20} aria-label="Current frame" defaultValue="0" />
                <Spin $height={18} />
                <IconButton aria-label="Time configuration" $width={20}>
                    <Glyph d="M2 1.500H11V15H2ZM4 4H9V8H4ZM4 11H6M12.500 8.500A4 4 0 1 0 12.500 16.500A4 4 0 1 0 12.500 8.500M12.500 10V13H15" />
                </IconButton>
            </TransportRow>
        </Transport>
        <Nav>
            {navGlyphs.map(([name, d]) => (
                <IconButton key={name} aria-label={name}>
                    <Glyph d={d} />
                </IconButton>
            ))}
        </Nav>
    </Bar>
);

export default App;
